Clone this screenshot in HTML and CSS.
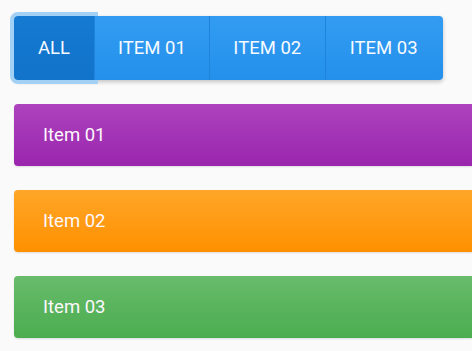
FILE: index.html
```html
<!DOCTYPE html>
<html>
<head>
<meta charset="utf-8">
<link rel="stylesheet" href="styles.css">
</head>
<body>
<div class="page">
  <nav class="tabs">
    <button class="tab active">ALL</button>
    <button class="tab">ITEM 01</button>
    <button class="tab">ITEM 02</button>
    <button class="tab">ITEM 03</button>
  </nav>
  <div class="list">
    <div class="bar purple">Item 01</div>
    <div class="bar orange">Item 02</div>
    <div class="bar green">Item 03</div>
  </div>
</div>
</body>
</html>
```

FILE: styles.css
```css
html {
  background: #ffffff;
}
body {
  margin: 0;
  font-family: Roboto, "Liberation Sans", sans-serif;
}
.page {
  width: 472px;
  height: 351px;
  background: #fafafa;
  box-sizing: border-box;
  padding: 16px 0 0 14px;
  overflow: hidden;
}
.tabs {
  display: inline-flex;
  height: 64px;
  border-radius: 4px;
  box-shadow: 0 2px 4px rgba(0, 0, 0, 0.22);
}
.tab {
  font-family: inherit;
  font-size: 18.5px;
  color: #f7fbff;
  background: linear-gradient(#339cf2, #2490eb);
  border: 0;
  border-left: 1px solid #1f84d9;
  padding: 0 23.5px 0 23px;
  margin: 0;
  cursor: pointer;
}
.tab:first-child {
  border-left: 0;
}
.tab:last-child {
  border-radius: 0 4px 4px 0;
  padding: 0 25px 0 24px;
}
.tab.active {
  width: 80px;
  padding: 0;
  background: linear-gradient(#157ad2, #1273ca);
  border-radius: 4px 0 0 4px;
  box-shadow: 0 0 0 4px #a3d1f5;
}
.list {
  display: flex;
  flex-direction: column;
  gap: 24px;
  margin-top: 24px;
}
.bar {
  height: 62px;
  display: flex;
  align-items: center;
  padding-left: 29px;
  font-size: 18.5px;
  color: #fdf8fd;
  border-radius: 4px 0 0 4px;
  box-shadow: 0 1px 2px rgba(0, 0, 0, 0.12);
}
.purple {
  background: linear-gradient(#ad43bd, #9a25ae);
}
.orange {
  background: linear-gradient(#ffa628, #ff9000);
}
.green {
  background: linear-gradient(#68bb6b, #4bad4f);
}
```
